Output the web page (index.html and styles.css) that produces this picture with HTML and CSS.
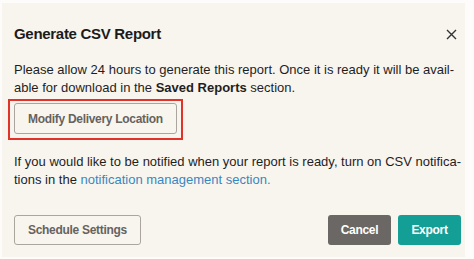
FILE: index.html
```html
<!DOCTYPE html>
<html lang="en">
<head>
    <meta charset="UTF-8">
    <meta name="viewport" content="width=device-width, initial-scale=1.0">
    <title>Generate CSV Report</title>
    <link rel="stylesheet" href="styles.css">
</head>
<body>
    <div class="dialog">
        <div class="dialog-header">
            <div class="dialog-title">Generate CSV Report</div>
            <button class="close-button" aria-label="Close">
                <svg width="11" height="11" viewBox="0 0 11 11">
                    <path d="M1 1 L10 10 M10 1 L1 10" stroke="#333" stroke-width="1.4" fill="none"/>
                </svg>
            </button>
        </div>
        <p class="dialog-text">Please allow 24 hours to generate this report. Once it is ready it will be avail-<br>able for download in the <strong>Saved Reports</strong> section.</p>
        <div class="highlight">
            <button class="outline-button">Modify Delivery Location</button>
        </div>
        <p class="dialog-text notify">If you would like to be notified when your report is ready, turn on CSV notifica-<br>tions in the <a href="#">notification management section.</a></p>
        <div class="dialog-footer">
            <button class="outline-button">Schedule Settings</button>
            <div class="footer-actions">
                <button class="cancel">Cancel</button>
                <button class="export">Export</button>
            </div>
        </div>
    </div>
</body>
</html>
```
FILE: styles.css
```css
body {
    margin: 0;
    background-color: #fdfcfa;
    font-family: 'Liberation Sans', Arial, sans-serif;
    color: #1e1e1e;
}
.dialog {
    width: 447px;
    margin: 3px 0 0 2px;
    padding: 21px 4px 12px 12px;
    background-color: #f8f5ef;
}
.dialog-header {
    display: flex;
    justify-content: space-between;
    align-items: center;
    height: 20px;
    padding-right: 4px;
}
.dialog-title {
    font-size: 15px;
    line-height: 20px;
    font-weight: bold;
    letter-spacing: -0.3px;
    color: #1b1b1b;
}
.close-button {
    background: none;
    border: none;
    padding: 0;
    cursor: pointer;
    display: flex;
}
.dialog-text {
    margin: 17px 0 0;
    width: 447px;
    font-size: 13px;
    line-height: 18px;
    white-space: nowrap;
}
.dialog-text strong {
    font-weight: bold;
}
.dialog-text a {
    color: #3a86c0;
    text-decoration: none;
}
.notify {
    margin-top: 13px;
}
.highlight {
    display: inline-block;
    margin: 2px 0 0 -6px;
    padding: 2px 4px 4px;
    border: 2px solid #e2332b;
}
.outline-button {
    height: 31px;
    padding: 0 13px;
    border: 1px solid #aaa59f;
    border-radius: 3px;
    background-color: #f8f5ef;
    color: #66625e;
    font-family: inherit;
    font-size: 12px;
    font-weight: bold;
    letter-spacing: -0.3px;
    cursor: pointer;
}
.dialog-footer {
    display: flex;
    justify-content: space-between;
    align-items: center;
    margin-top: 26px;
}
.dialog-footer .outline-button {
    height: 30px;
}
.footer-actions {
    display: flex;
    gap: 7px;
}
.cancel,
.export {
    height: 30px;
    width: 63px;
    border: none;
    border-radius: 3px;
    color: white;
    font-family: inherit;
    font-size: 12px;
    font-weight: bold;
    letter-spacing: -0.3px;
    cursor: pointer;
}
.cancel {
    background-color: #6a6765;
}
.export {
    background-color: #139e96;
}
```
